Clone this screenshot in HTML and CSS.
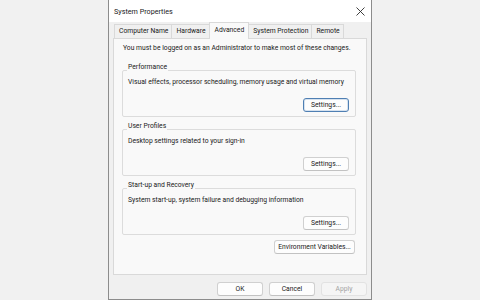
FILE: index.html
```html
<!DOCTYPE html>
<html lang="en">
<head>
  <meta charset="UTF-8">
  <title>System Properties</title>
  <link rel="stylesheet" href="styles.css">
</head>
<body>
  <div class="dialog">
    <div class="titlebar">
      <span class="title">System Properties</span>
      <svg class="close" width="9" height="9" viewBox="0 0 9 9">
        <path d="M0.5 0.5 L8.5 8.5 M8.5 0.5 L0.5 8.5" stroke="#2b2b2b" stroke-width="0.9" fill="none"/>
      </svg>
    </div>
    <div class="content">
      <div class="tabs">
        <span class="tab">Computer Name</span>
        <span class="tab">Hardware</span>
        <span class="tab active">Advanced</span>
        <span class="tab">System Protection</span>
        <span class="tab">Remote</span>
      </div>
      <div class="panel">
        <p class="note">You must be logged on as an Administrator to make most of these changes.</p>

        <fieldset class="group">
          <legend>Performance</legend>
          <p>Visual effects, processor scheduling, memory usage and virtual memory</p>
          <div class="actions"><button class="btn focused">Settings...</button></div>
        </fieldset>

        <fieldset class="group">
          <legend>User Profiles</legend>
          <p>Desktop settings related to your sign-in</p>
          <div class="actions"><button class="btn">Settings...</button></div>
        </fieldset>

        <fieldset class="group">
          <legend>Start-up and Recovery</legend>
          <p>System start-up, system failure and debugging information</p>
          <div class="actions"><button class="btn">Settings...</button></div>
        </fieldset>

        <div class="actions env"><button class="btn wide">Environment Variables...</button></div>
      </div>
      <div class="footer">
        <button class="btn">OK</button>
        <button class="btn">Cancel</button>
        <button class="btn" disabled>Apply</button>
      </div>
    </div>
  </div>
</body>
</html>
```

FILE: styles.css
```css
/* Page */
body {
  margin: 0;
  height: 300px;
  background-color: #f1f1f1;
  font-family: Roboto, "Liberation Sans", sans-serif;
  font-size: 6.75px;
  line-height: 9px;
  color: #1a1a1a;
  display: flex;
  justify-content: center;
  overflow: hidden;
}

/* Window */
.dialog {
  width: 262px;
  height: 299px;
  border: 1px solid #8c8c8c;
  border-top: none;
  background-color: #f0f0f0;
  display: flex;
  flex-direction: column;
}

.titlebar {
  height: 22px;
  background-color: #ffffff;
  display: flex;
  align-items: center;
  justify-content: space-between;
  padding: 0 6px 0 5px;
  font-size: 7.2px;
}

.content {
  flex: 1;
  padding: 1px 4px 0 4px;
  display: flex;
  flex-direction: column;
}

/* Tabs */
.tabs {
  display: flex;
  height: 15px;
  padding-left: 1px;
  align-items: flex-end;
  white-space: nowrap;
}

.tab {
  padding: 0 3px 0 4px;
  height: 13px;
  line-height: 13px;
  border: 1px solid #d9d9d9;
  border-bottom: none;
  border-right: none;
  background-color: #f0f0f0;
}

.tab:last-child {
  border-right: 1px solid #d9d9d9;
}

.tab.active {
  height: 16px;
  line-height: 14px;
  background-color: #f9f9f9;
  border-right: 1px solid #d9d9d9;
  margin-bottom: -1px;
  position: relative;
  z-index: 1;
  padding: 0 4px 0 5px;
}

.tab.active + .tab {
  border-left: none;
}

.panel {
  height: 235px;
  background-color: #f9f9f9;
  border: 1px solid #d9d9d9;
  padding: 0 10px 0 8px;
}

.note {
  margin: 5px 0 10px 1px;
  white-space: nowrap;
}

/* Group boxes */
.group {
  margin: 0 0 5px 0;
  padding: 1px 6px 4px 5px;
  border: 1px solid #dcdcdc;
  border-radius: 2px;
  min-width: 0;
}

.group legend {
  padding: 0 1px 5px 1px;
  margin-left: -1px;
}

.group p {
  margin: 0 0 11px 0;
  white-space: nowrap;
}

.actions {
  display: flex;
  justify-content: flex-end;
}

.env {
  margin-top: 5px;
  margin-right: 1px;
}

/* Buttons */
.btn {
  font-family: inherit;
  font-size: 6.75px;
  color: #1a1a1a;
  width: 46px;
  height: 14px;
  padding: 0;
  background-color: #fdfdfd;
  border: 1px solid #d0d0d0;
  border-bottom-color: #c2c2c2;
  border-radius: 3px;
}

.btn.focused {
  border: 1px solid #4f7fb3;
  box-shadow: inset 0 0 0 1px #d6e2ef;
}

.btn.wide {
  width: 81px;
}

.btn:disabled {
  color: #a3a3a3;
  background-color: #f5f5f5;
  border-color: #e2e2e2;
}

.footer {
  display: flex;
  justify-content: flex-end;
  gap: 6px;
  padding: 7px 0 0 0;
}
```
